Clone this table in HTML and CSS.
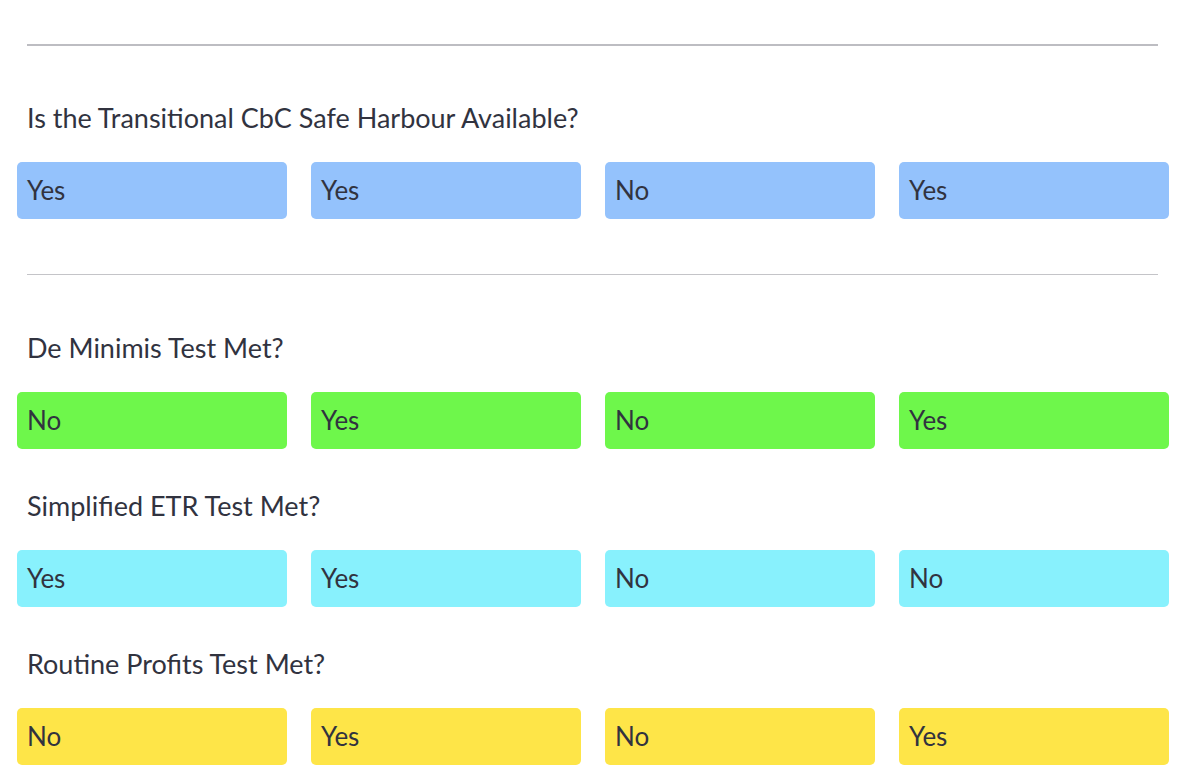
FILE: index.html
```html
<!DOCTYPE html>
<html lang="en">
<head>
<meta charset="utf-8">
<link rel="stylesheet" href="styles.css">
</head>
<body>
<main class="page">
  <hr class="rule rule-top">
  <section class="group group-first">
    <div class="label">Is the Transitional CbC Safe Harbour Available?</div>
    <div class="row">
      <div class="cell blue">Yes</div>
      <div class="cell blue">Yes</div>
      <div class="cell blue">No</div>
      <div class="cell blue">Yes</div>
    </div>
  </section>
  <hr class="rule rule-mid">
  <section class="group group-after-rule">
    <div class="label">De Minimis Test Met?</div>
    <div class="row">
      <div class="cell green">No</div>
      <div class="cell green">Yes</div>
      <div class="cell green">No</div>
      <div class="cell green">Yes</div>
    </div>
  </section>
  <section class="group">
    <div class="label">Simplified ETR Test Met?</div>
    <div class="row">
      <div class="cell cyan">Yes</div>
      <div class="cell cyan">Yes</div>
      <div class="cell cyan">No</div>
      <div class="cell cyan">No</div>
    </div>
  </section>
  <section class="group">
    <div class="label">Routine Profits Test Met?</div>
    <div class="row">
      <div class="cell yellow">No</div>
      <div class="cell yellow">Yes</div>
      <div class="cell yellow">No</div>
      <div class="cell yellow">Yes</div>
    </div>
  </section>
</main>
</body>
</html>
```

FILE: styles.css
```css
html, body {
  margin: 0;
  padding: 0;
  background: #ffffff;
}

body {
  font-family: "Lato", "Noto Sans", sans-serif;
  color: rgb(49, 51, 63);
  overflow: hidden;
}

.page {
  width: 1152px;
  padding: 44px 0 0 17px;
}

.rule {
  margin: 0 11px 0 10px;
  border: none;
  height: 2px;
  background: #bdbdc2;
}

.rule-mid {
  height: 1px;
  margin-top: 55px;
  background: #c4c4c8;
}

.group {
  margin-top: 40px;
}

.group-first {
  margin-top: 55px;
}

.group-after-rule {
  margin-top: 56px;
}

.label {
  height: 34px;
  line-height: 34px;
  font-size: 27px;
  padding-left: 10px;
  margin-bottom: 27px;
}

.row {
  display: grid;
  grid-template-columns: repeat(4, 270px);
  column-gap: 24px;
}

.cell {
  height: 57px;
  line-height: 57px;
  border-radius: 5px;
  padding-left: 10px;
  font-size: 26px;
}

.blue { background: #94c2fc; }
.green { background: #6ef74b; }
.cyan { background: #88f1fd; }
.yellow { background: #fee548; }
```
